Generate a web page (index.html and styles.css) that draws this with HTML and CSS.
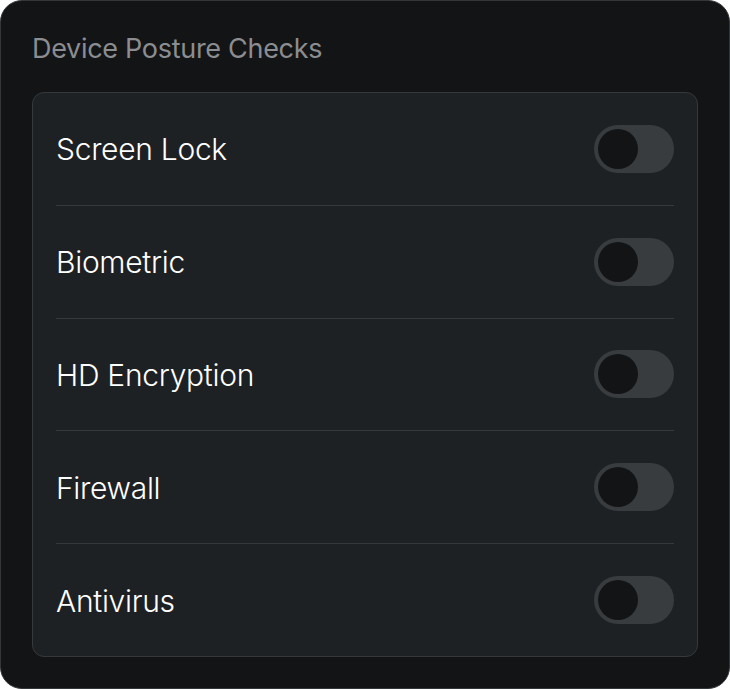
FILE: index.html
```html
<!DOCTYPE html>
<html>
<head>
<meta charset="utf-8">
<link rel="stylesheet" href="styles.css">
</head>
<body>
<div class="panel">
  <h2 class="title">Device Posture Checks</h2>
  <div class="list">
    <div class="row"><span class="label">Screen Lock</span><span class="toggle"><span class="knob"></span></span></div>
    <div class="row"><span class="label">Biometric</span><span class="toggle"><span class="knob"></span></span></div>
    <div class="row"><span class="label">HD Encryption</span><span class="toggle"><span class="knob"></span></span></div>
    <div class="row"><span class="label">Firewall</span><span class="toggle"><span class="knob"></span></span></div>
    <div class="row"><span class="label">Antivirus</span><span class="toggle"><span class="knob"></span></span></div>
  </div>
</div>
</body>
</html>
```
FILE: styles.css
```css
html, body {
  margin: 0;
  padding: 0;
  background: #ffffff;
}
body {
  font-family: Inter, "Noto Sans", sans-serif;
  width: 730px;
  height: 689px;
}
.panel {
  box-sizing: border-box;
  width: 730px;
  height: 689px;
  background: #131416;
  border: 1px solid #34373a;
  border-radius: 22px;
  padding: 33px 31px 31px 31px;
  display: flex;
  flex-direction: column;
}
.title {
  margin: 0 0 28px 0;
  height: 30px;
  font-size: 27px;
  line-height: 30px;
  font-weight: 400;
  letter-spacing: -0.3px;
  color: #8b8d90;
}
.list {
  box-sizing: border-box;
  height: 565px;
  background: #1e2124;
  border: 1px solid #36393c;
  border-radius: 12px;
  padding: 0 23px;
  display: flex;
  flex-direction: column;
}
.row {
  flex: 1;
  display: flex;
  align-items: center;
  justify-content: space-between;
  border-bottom: 1px solid #36393c;
}
.row:last-child {
  border-bottom: none;
}
.label {
  font-size: 30px;
  font-weight: 300;
  letter-spacing: -0.3px;
  color: #ffffff;
  margin-top: 1px;
}
.toggle {
  box-sizing: border-box;
  width: 80px;
  height: 48px;
  border-radius: 24px;
  background: #393c3f;
  padding: 4px;
  display: flex;
}
.knob {
  width: 40px;
  height: 40px;
  border-radius: 50%;
  background: #131416;
}
```
